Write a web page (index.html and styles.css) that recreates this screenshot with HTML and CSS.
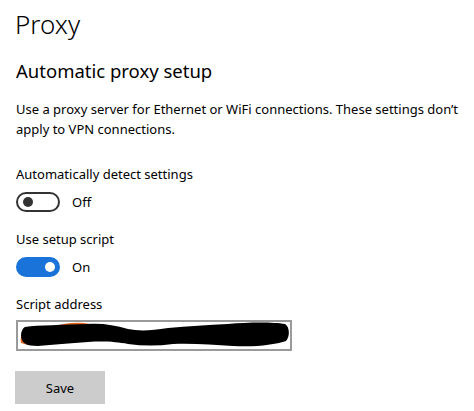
FILE: index.html
```html
<!DOCTYPE html>
<html>
<head>
<meta charset="utf-8">
<link rel="stylesheet" href="styles.css">
</head>
<body>
<main class="page">
  <h1 class="title">Proxy</h1>
  <h2 class="subtitle">Automatic proxy setup</h2>
  <p class="desc">Use a proxy server for Ethernet or WiFi connections. These settings don’t apply to VPN connections.</p>

  <div class="setting first">
    <div class="label">Automatically detect settings</div>
    <div class="toggle-row">
      <span class="toggle off"><span class="knob"></span></span>
      <span class="state">Off</span>
    </div>
  </div>

  <div class="setting">
    <div class="label">Use setup script</div>
    <div class="toggle-row">
      <span class="toggle on"><span class="knob"></span></span>
      <span class="state">On</span>
    </div>
  </div>

  <div class="setting">
    <div class="label">Script address</div>
    <div class="input">
      <svg class="redact" viewBox="0 0 272 27" width="272" height="27">
        <path d="M3 21 C2 16 3 12 8 10 L10 23 Z" fill="#e8651c"/>
        <path d="M38 4 C50 0 62 0 72 2 L60 6 Z" fill="#e8651c"/>
        <path d="M7 5 C20 3 45 3 70 2 C84 1 96 3 110 7 C120 9 132 9 150 6 C170 4 190 3 210 2 C232 0 255 0 267 2 C272 5 272 15 268 19 C255 23 240 25 215 24 C195 23 175 21 155 22 C140 24 125 24 110 22 C98 20 88 19 70 20 C52 21 35 23 20 24 C8 24 3 21 3 13 C3 9 5 6 7 5 Z" fill="#000"/>
      </svg>
    </div>
  </div>

  <button class="save">Save</button>
</main>
</body>
</html>
```

FILE: styles.css
```css
html, body {
  margin: 0;
  padding: 0;
  background: #fff;
}
.page {
  font-family: "Noto Sans", "Open Sans", sans-serif;
  color: #000;
  padding: 6px 0 0 15px;
}
.title {
  font-weight: 300;
  font-size: 26px;
  line-height: 36px;
  margin: 0;
}
.subtitle {
  font-weight: 400;
  font-size: 18.5px;
  line-height: 26px;
  margin: 16px 0 0 1px;
}
.desc {
  font-size: 13px;
  line-height: 20px;
  margin: 15px 0 0 1px;
  max-width: 456px;
}
.setting {
  margin-top: 15px;
}
.setting.first {
  margin-top: 25px;
}
.label {
  font-size: 13px;
  line-height: 20px;
  margin-left: 1px;
}
.toggle-row {
  display: flex;
  align-items: center;
  gap: 12px;
  margin-top: 6px;
  height: 24px;
}
.toggle {
  box-sizing: border-box;
  width: 44px;
  height: 20px;
  border-radius: 10px;
  display: flex;
  align-items: center;
  padding: 0 4px;
  margin-left: 1px;
}
.toggle.off {
  border: 2px solid #333;
  background: #fff;
  justify-content: flex-start;
}
.toggle.off .knob {
  background: #333;
  margin-left: 1px;
}
.toggle.on {
  background: #1a73d9;
  justify-content: flex-end;
}
.toggle.on .knob {
  background: #fff;
  margin-right: 1px;
}
.knob {
  width: 10px;
  height: 10px;
  border-radius: 50%;
}
.state {
  font-size: 13px;
}
.input {
  box-sizing: border-box;
  width: 276px;
  height: 31px;
  border: 2px solid #9a9a9a;
  margin-top: 6px;
  margin-left: 1px;
  display: flex;
  align-items: center;
}
.redact {
  display: block;
}
.save {
  display: block;
  margin-top: 20px;
  width: 90px;
  height: 33px;
  border: none;
  background: #cccccc;
  font-family: "Noto Sans", "Open Sans", sans-serif;
  font-size: 13px;
  color: #000;
  padding: 0;
}
```
